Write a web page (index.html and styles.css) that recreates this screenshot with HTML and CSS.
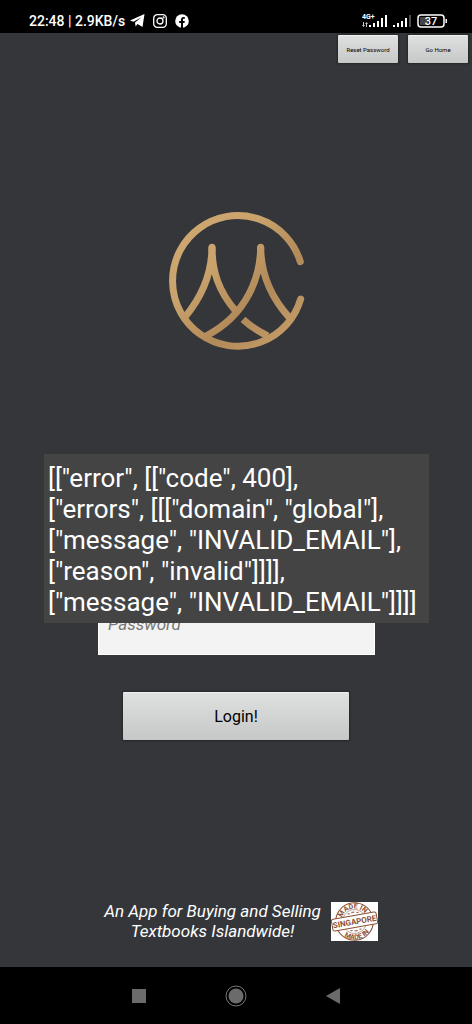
FILE: index.html
```html
<!DOCTYPE html>
<html lang="en">

<head>
    <meta charset="UTF-8">
    <meta name="viewport" content="width=device-width, initial-scale=1.0">
    <title>Login</title>
    <link rel="stylesheet" href="styles.css">
</head>

<body>
    <header class="status-bar">
        <div class="status-left">
            <span class="status-text">22:48 | 2.9KB/s</span>
            <svg width="15" height="14" viewBox="0 0 15 14" fill="#fff">
                <path d="M0 6.600 14.500 0 12.500 13 7.500 10 5.600 12.500 5 8.500 11.500 3.200 3.500 7.800Z" />
            </svg>
            <svg class="status-app" width="14" height="14" viewBox="0 0 14 14" fill="none" stroke="#fff" stroke-width="1.300">
                <rect x="0.700" y="0.700" width="12.600" height="12.600" rx="3.600" />
                <circle cx="7" cy="7" r="3" />
                <circle cx="10.600" cy="3.400" r="0.400" />
            </svg>
            <svg class="status-app" width="14" height="14" viewBox="0 0 14 14">
                <circle cx="7" cy="7" r="6.800" fill="#fff" />
                <path d="M6 14V9H4.200V7H6V5.500C6 3.700 7 2.900 8.500 2.900H9.800V4.700H9C8.200 4.700 8 5.100 8 5.700V7H9.800L9.500 9H8V14Z" fill="#000" />
            </svg>
        </div>
        <div class="status-right">
            <svg width="26" height="14" viewBox="0 0 26 14" fill="#fff">
                <text class="network-label" x="0" y="5">4G+</text>
                <path d="M1 8h1v3h1L1.500 13 0 11h1zM4 13v-3H3l1.500-2L6 10H5v3z" opacity="0.800" />
                <path d="M7 11h2v2H7zM11 9h2v4h-2zM15 7h2v6h-2zM19 4h2v9h-2zM23 1h2v12h-2z" />
            </svg>
            <svg class="signal" width="18" height="14" viewBox="0 0 18 14" fill="#fff">
                <path d="M0 11h2v2H0zM4 9h2v4H4zM8 7h2v6H8zM12 4h2v9h-2z" />
                <path d="M16 1h2v12h-2z" opacity="0.300" />
            </svg>
            <svg width="31" height="14" viewBox="0 0 31 14">
                <rect x="1" y="1" width="26" height="12" rx="3" fill="none" stroke="#fff" stroke-width="1.500" />
                <rect x="3" y="3" width="8" height="8" fill="#444" />
                <rect x="28.500" y="5" width="1.500" height="4" fill="#fff" />
                <text class="battery-label" x="14" y="11" text-anchor="middle" fill="#fff">37</text>
            </svg>
        </div>
    </header>

    <main class="screen">
        <div class="toolbar">
            <button type="button" class="btn btn-small">Reset Password</button>
            <button type="button" class="btn btn-small">Go Home</button>
        </div>

        <svg class="logo" viewBox="0 0 480 480" fill="none" stroke="url(#gold)" stroke-width="21" stroke-linecap="round">
            <defs>
                <linearGradient id="gold" gradientUnits="userSpaceOnUse" x1="40" y1="40" x2="440" y2="440">
                    <stop offset="0" stop-color="#d2aa73" />
                    <stop offset="0.350" stop-color="#c9a26c" />
                    <stop offset="0.650" stop-color="#b18a59" />
                    <stop offset="1" stop-color="#c9a16b" />
                </linearGradient>
            </defs>
            <path d="M433 185A196 196 0 1 0 434 297" />
            <path stroke-linecap="butt" d="M168 140C168 215 145 281 87 351M168 140C168 215 188 274 240 334M314 140C314 225 276 344 150 408M314 140C314 215 340 286 400 353M261 358Q292 387 335 408" />
            <path d="M168 142V152M314 142V152" />
        </svg>

        <form class="login-form">
            <input class="field" type="password" placeholder="Password" aria-label="Password">
            <button type="button" class="btn btn-login">Login!</button>
            <div class="toast" role="alert">
                [["error", [["code", 400],<br>
                ["errors", [[["domain", "global"],<br>
                ["message", "INVALID_EMAIL"],<br>
                ["reason", "invalid"]]]],<br>
                ["message", "INVALID_EMAIL"]]]]
            </div>
        </form>

        <footer class="tagline">
            <p>An App for Buying and Selling<br>Textbooks Islandwide!</p>
            <svg class="stamp" viewBox="0 0 47 39">
                <defs>
                    <path id="arcTop" d="M10.500 19.500A13 13 0 0 1 36.500 19.500" />
                    <path id="arcBottom" d="M5.500 19.500A18 18 0 0 0 41.500 19.500" />
                </defs>
                <rect width="47" height="39" fill="#fff" />
                <g transform="rotate(-10 23.500 19.500)">
                    <circle cx="23.500" cy="19.500" r="18.800" fill="none" stroke="#8b5136" stroke-width="1" />
                    <circle cx="23.500" cy="19.500" r="12" fill="none" stroke="#8b5136" stroke-width="0.500" />
                    <text class="stamp-arc"><textPath href="#arcTop" startOffset="50%" text-anchor="middle">MADE IN</textPath></text>
                    <text class="stamp-arc"><textPath href="#arcBottom" startOffset="50%" text-anchor="middle">MADE IN</textPath></text>
                    <path d="M18 11h2M22 10h3M27 11h2M18 28h2M22 29h3M27 28h2" stroke="#8b5136" />
                    <rect x="0.800" y="13.500" width="45.400" height="12" rx="2" fill="#fff" stroke="#8b5136" />
                    <text class="stamp-name" x="23.500" y="22.500" text-anchor="middle">SINGAPORE</text>
                </g>
            </svg>
        </footer>
    </main>

    <nav class="nav-bar">
        <button type="button" class="nav-btn" aria-label="Recent apps">
            <svg width="22" height="22" viewBox="0 0 22 22"><rect x="4" y="4" width="14" height="14" fill="#6b6b6b" /></svg>
        </button>
        <button type="button" class="nav-btn" aria-label="Home">
            <svg width="22" height="22" viewBox="0 0 22 22">
                <circle cx="11" cy="11" r="10" fill="none" stroke="#777" />
                <circle cx="11" cy="11" r="7.500" fill="#6b6b6b" />
            </svg>
        </button>
        <button type="button" class="nav-btn" aria-label="Back">
            <svg width="22" height="22" viewBox="0 0 22 22"><path d="M4 11 18 3V19Z" fill="#6b6b6b" /></svg>
        </button>
    </nav>
</body>

</html>
```
FILE: styles.css
```css
* {
    margin: 0;
    padding: 0;
    box-sizing: border-box;
    font-family: Roboto, sans-serif;
}

body {
    display: flex;
    flex-direction: column;
    min-height: 100vh;
    background-color: #35363a;
}

svg {
    display: block;
    flex: none;
}

.status-bar {
    display: flex;
    justify-content: space-between;
    height: 33px;
    padding: 8px 24px 0 29px;
    background-color: #000;
    color: #fff;
}

.status-left,
.status-right {
    display: flex;
    align-items: center;
}

.status-text {
    margin-right: 5px;
    font-size: 14px;
    font-weight: 500;
}

.status-app {
    margin-left: 8px;
}

.signal {
    margin: 0 6px 0 5px;
}

.network-label {
    font-size: 7px;
    font-weight: 700;
}

.battery-label {
    font-size: 11px;
    font-weight: 500;
}

.screen {
    flex: 1;
    display: flex;
    flex-direction: column;
}

.toolbar {
    display: flex;
    justify-content: flex-end;
    gap: 10px;
    padding: 2px 4px;
}

.btn {
    border: none;
    border-radius: 1px;
    background-image: linear-gradient(#dfe0e0, #c6c7c7);
    box-shadow: inset 0 1px #f2f2f2, 0 0 2px 1px rgba(0, 0, 0, 0.3);
    color: #000;
    cursor: pointer;
}

.btn-small {
    width: 60px;
    height: 28px;
    font-size: 6px;
}

.logo {
    width: 160px;
    height: 160px;
    margin: 135px auto 0;
}

.login-form {
    position: relative;
    display: flex;
    flex-direction: column;
    margin-top: 94px;
    padding: 139px 97px 0 98px;
}

.field {
    width: 100%;
    height: 62px;
    padding: 0 9px;
    border: 1px solid #fff;
    background-color: #f3f3f3;
    font-size: 17px;
    font-style: italic;
    outline: none;
}

.field::placeholder {
    color: #777;
}

.btn-login {
    height: 48px;
    margin: 37px 26px 0 25px;
    font-size: 16px;
}

/* Error message sits on top of the form */
.toast {
    position: absolute;
    top: 0;
    left: 44px;
    right: 43px;
    padding: 9px 4px 5px;
    background-color: #444;
    color: #fff;
    font-size: 26px;
    line-height: 31px;
}

.tagline {
    display: flex;
    justify-content: center;
    align-items: center;
    gap: 10px;
    margin-top: auto;
    padding: 0 0 26px 10px;
    color: #fff;
    font-size: 17px;
    font-style: italic;
    line-height: 20px;
    text-align: center;
}

.stamp {
    width: 47px;
    height: 39px;
    font-style: normal;
    fill: #8b5136;
}

.stamp-arc {
    font-size: 7px;
    font-weight: 700;
}

.stamp-name {
    font-size: 8px;
    font-weight: 700;
}

.nav-bar {
    display: flex;
    justify-content: center;
    align-items: center;
    gap: 75px;
    height: 57px;
    background-color: #000;
}

.nav-btn {
    border: none;
    background: none;
    cursor: pointer;
}
```
